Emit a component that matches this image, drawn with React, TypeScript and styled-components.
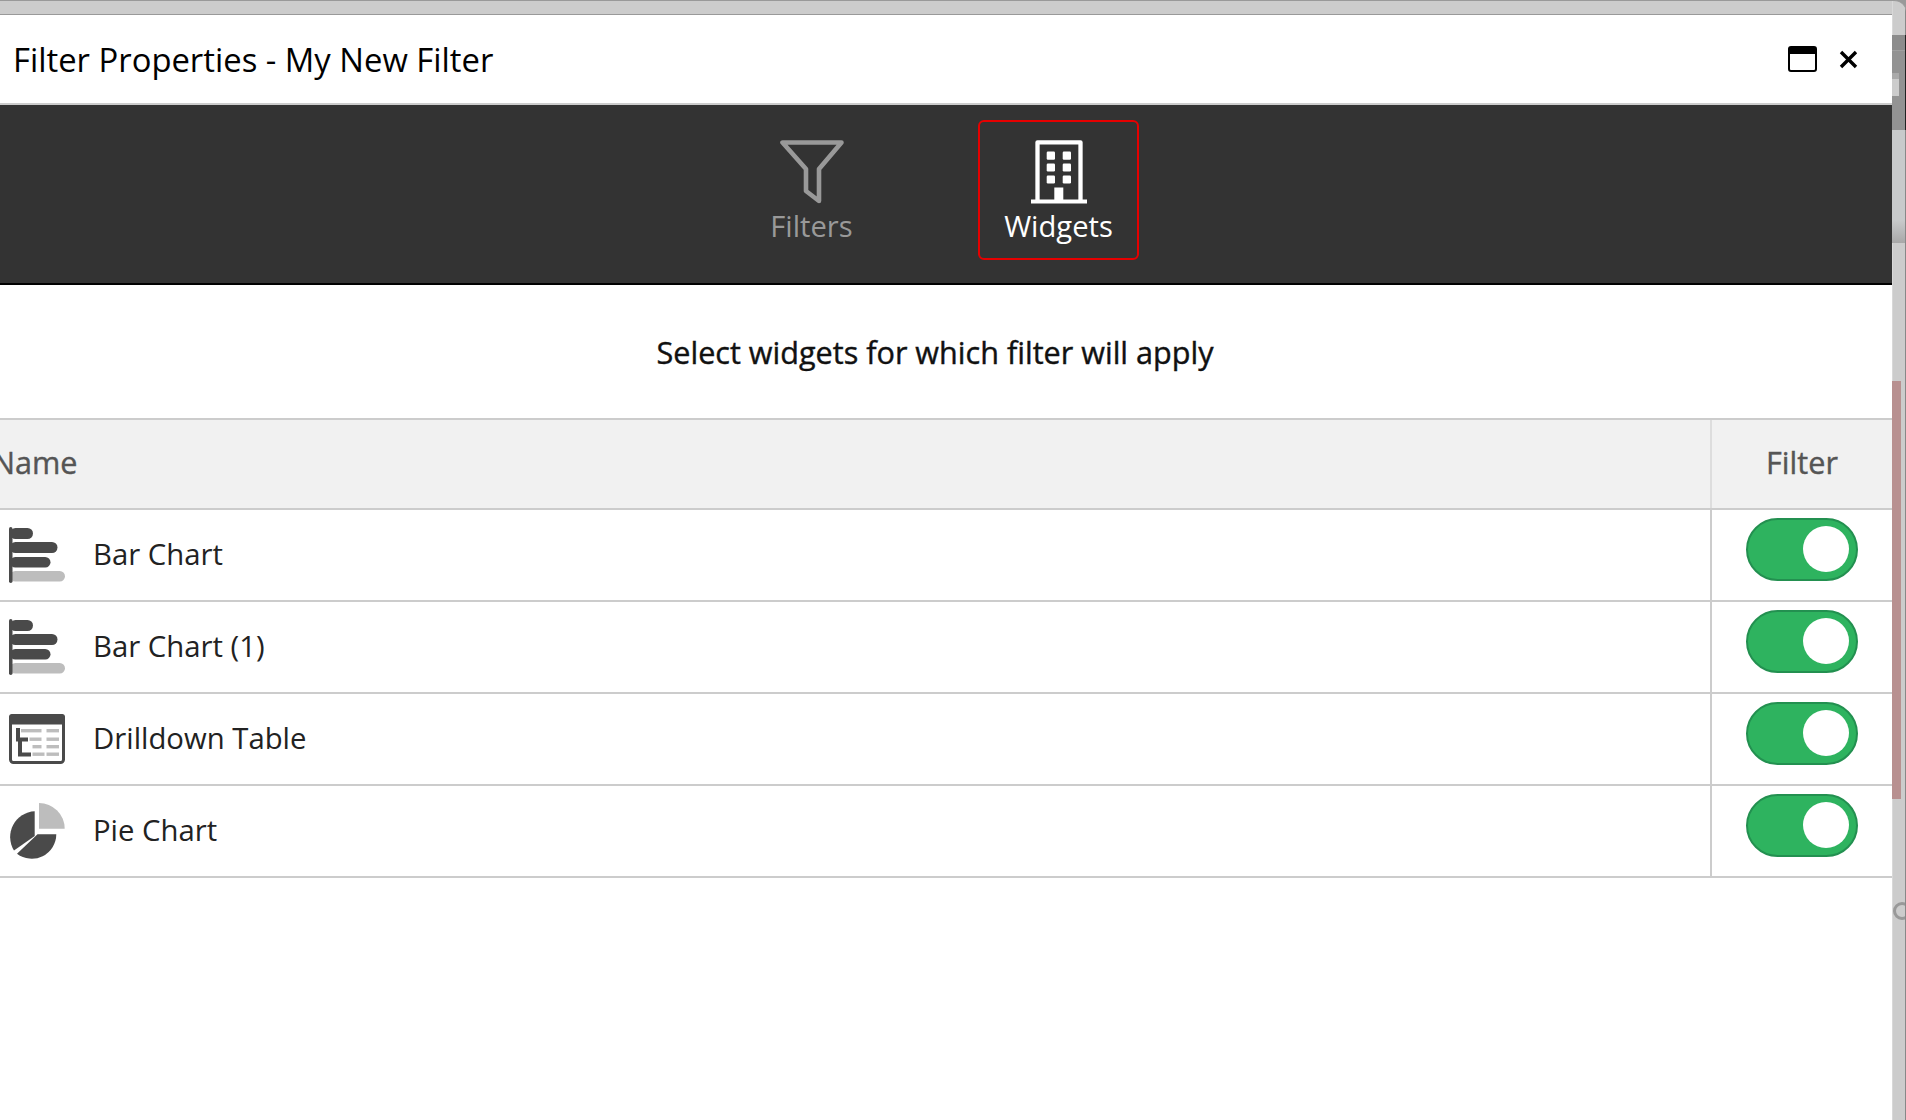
import React from "react";
import styled, { createGlobalStyle } from "styled-components";

const GlobalStyle = createGlobalStyle`
  * {
    box-sizing: border-box;
  }
  html, body {
    margin: 0;
    padding: 0;
    height: 100%;
    overflow: hidden;
    background: #999;
    font-family: "Open Sans", "Noto Sans", sans-serif;
  }
`;

const rows = [
  { name: "Bar Chart", kind: "bar" },
  { name: "Bar Chart (1)", kind: "bar" },
  { name: "Drilldown Table", kind: "table" },
  { name: "Pie Chart", kind: "pie" },
];

const BarIcon = () => (
  <svg width="56" height="56" viewBox="0 0 56 56">
    <rect x="1" y="1" width="23" height="11" rx="5.5" fill="#4a4a4a" />
    <rect x="1" y="15" width="47.5" height="11" rx="5.5" fill="#4a4a4a" />
    <rect x="1" y="30" width="40.5" height="10.5" rx="5.25" fill="#4a4a4a" />
    <rect x="1" y="44" width="55" height="10.5" rx="5.25" fill="#bdbdbd" />
    <rect x="0" y="0" width="3.5" height="56" rx="1.75" fill="#4a4a4a" />
  </svg>
);

const TableIcon = () => (
  <svg width="56" height="50" viewBox="0 0 56 50">
    <rect x="1.5" y="1.5" width="53" height="47" rx="3" fill="#fff" stroke="#4a4a4a" strokeWidth="3" />
    <rect x="0" y="0" width="56" height="10.5" rx="3" fill="#4a4a4a" />
    <path d="M9 14v11.5h10M11 25v15.5h11" stroke="#4a4a4a" strokeWidth="4" fill="none" />
    <g fill="#bdbdbd">
      <rect x="12" y="15" width="20.5" height="3.4" />
      <rect x="37.5" y="15" width="12.5" height="3.4" />
      <rect x="20.5" y="23.5" width="12" height="3.4" />
      <rect x="37.5" y="23.5" width="12.5" height="3.4" />
      <rect x="23.5" y="31" width="9" height="3.4" />
      <rect x="37.5" y="31" width="12.5" height="3.4" />
      <rect x="23.5" y="38.5" width="12" height="3.4" />
      <rect x="37.5" y="38.5" width="12.5" height="3.4" />
    </g>
  </svg>
);

const PieIcon = () => (
  <svg width="56" height="58" viewBox="0 -1 56 58">
    <path d="M30 0A25.7 25.7 0 0 1 55.7 25.7H30Z" fill="#bdbdbd" />
    <path d="M25.7 8.3V33L5 47.5A25.7 25.7 0 0 1 25.7 8.3Z" fill="#4a4a4a" />
    <path d="M8 50.7L28.5 31.3H47.3A24.5 24.5 0 0 1 8 50.7Z" fill="#4a4a4a" />
  </svg>
);

const FunnelIcon = () => (
  <svg width="64" height="64" viewBox="0 0 64 64" fill="none" stroke="#999" strokeWidth="4.6" strokeLinejoin="round">
    <path d="M2.5 2.5H61.5L39 29V61L26 51V29Z" />
  </svg>
);

const BuildingIcon = () => (
  <svg width="56" height="64" viewBox="0 0 56 64">
    <path d="M6.5 62V2.3H49.5V62" fill="none" stroke="#fff" strokeWidth="4.3" strokeLinejoin="round" />
    <rect x="0" y="59.5" width="56" height="4" fill="#fff" />
    <g fill="#fff">
      <rect x="15.7" y="11.5" width="8.3" height="8.3" rx="1.2" />
      <rect x="31.7" y="11.5" width="8.3" height="8.3" rx="1.2" />
      <rect x="15.7" y="23.5" width="8.3" height="8" rx="1.2" />
      <rect x="31.7" y="23.5" width="8.3" height="8" rx="1.2" />
      <rect x="15.7" y="35.5" width="8.3" height="8" rx="1.2" />
      <rect x="31.7" y="35.5" width="8.3" height="8" rx="1.2" />
      <rect x="23.3" y="47.5" width="9" height="13" />
    </g>
  </svg>
);

const rowIcon = (kind: string) => {
  if (kind === "bar") return <BarIcon />;
  if (kind === "table") return <TableIcon />;
  return <PieIcon />;
};

export default function App() {
  return (
    <>
      <GlobalStyle />
      <Page>
        <Dialog>
          <TitleBar>
            <Title>Filter Properties - My New Filter</Title>
            <TitleActions>
              <MaximizeIcon />
              <CloseIcon viewBox="0 0 19 19">
                <path d="M2 2l15 15M17 2L2 17" stroke="#000" strokeWidth="3.4" />
              </CloseIcon>
            </TitleActions>
          </TitleBar>
          <Tabs>
            <Tab>
              <FunnelIcon />
              <TabLabel>Filters</TabLabel>
            </Tab>
            <Tab $active>
              <BuildingIcon />
              <TabLabel $active>Widgets</TabLabel>
            </Tab>
          </Tabs>
          <Instruction>Select widgets for which filter will apply</Instruction>
          <TableHeader>
            <NameHead>Name</NameHead>
            <FilterHead>Filter</FilterHead>
          </TableHeader>
          {rows.map((row) => (
            <Row key={row.name}>
              <NameCell>
                <IconSlot>{rowIcon(row.kind)}</IconSlot>
                <RowName>{row.name}</RowName>
              </NameCell>
              <ToggleCell>
                <Toggle />
              </ToggleCell>
            </Row>
          ))}
        </Dialog>
        <Strip>
          <StripTop />
          <StripDark>
            <PageGlyph />
          </StripDark>
          <StripLight />
          <StripGray />
          <StripPink />
          <StripRest>
            <StripGlyph />
          </StripRest>
        </Strip>
      </Page>
    </>
  );
}

const Page = styled.div`
  display: flex;
  width: 1906px;
  height: 1120px;
  overflow: hidden;
  background: #ccc;
  border-top: 1px solid #999;
  border-top-right-radius: 12px;
`;

const Dialog = styled.div`
  width: 1892px;
  flex: none;
  margin-top: 13px;
  border-top: 1px solid #999;
  background: #fff;
  display: flex;
  flex-direction: column;
`;

const TitleBar = styled.div`
  height: 90px;
  flex: none;
  display: flex;
  align-items: center;
  justify-content: space-between;
  padding: 0 34px 0 13px;
  border-bottom: 2px solid #ccc;
`;

const Title = styled.div`
  font-size: 32.8px;
  color: #000;
`;

const TitleActions = styled.div`
  display: flex;
  align-items: center;
  gap: 22px;
`;

const MaximizeIcon = styled.div`
  width: 29px;
  height: 26px;
  border: 2.5px solid #000;
  border-top-width: 8px;
  border-radius: 3px;
`;

const CloseIcon = styled.svg`
  width: 19px;
  height: 19px;
`;

const Tabs = styled.div`
  height: 180px;
  flex: none;
  background: #333;
  border-bottom: 2px solid #000;
  display: flex;
  align-items: center;
  justify-content: center;
  gap: 86px;
  padding: 0 22px 8px 0;
`;

const Tab = styled.div<{ $active?: boolean }>`
  width: 161px;
  height: 140px;
  padding-top: 18px;
  border: 2px solid ${(p) => (p.$active ? "#e60000" : "transparent")};
  border-radius: 6px;
  display: flex;
  flex-direction: column;
  align-items: center;
`;

const TabLabel = styled.div<{ $active?: boolean }>`
  margin-top: 4px;
  font-size: 29.2px;
  line-height: 36px;
  color: ${(p) => (p.$active ? "#fff" : "#999")};
`;

const Instruction = styled.div`
  height: 133px;
  flex: none;
  display: flex;
  align-items: center;
  justify-content: center;
  padding-right: 22px;
  font-size: 30.6px;
  -webkit-text-stroke: 0.4px #111;
  color: #111;
`;

const TableHeader = styled.div`
  display: flex;
  flex: none;
  height: 92px;
  background: #f1f1f1;
  border-top: 2px solid #ccc;
  border-bottom: 2px solid #ccc;
`;

const NameHead = styled.div`
  flex: 1;
  display: flex;
  align-items: center;
  margin-left: -8px;
  padding-bottom: 4px;
  font-size: 30.6px;
  -webkit-text-stroke: 0.4px #555;
  color: #555;
`;

const FilterHead = styled.div`
  width: 182px;
  padding-bottom: 4px;
  border-left: 2px solid #ddd;
  display: flex;
  align-items: center;
  justify-content: center;
  font-size: 30.6px;
  -webkit-text-stroke: 0.4px #555;
  color: #555;
`;

const Row = styled.div`
  display: flex;
  flex: none;
  height: 92px;
  border-bottom: 2px solid #ccc;
`;

const NameCell = styled.div`
  flex: 1;
  display: flex;
  align-items: center;
  padding-left: 9px;
`;

const IconSlot = styled.div`
  width: 84px;
  display: flex;
  align-items: center;
`;

const RowName = styled.div`
  margin-top: -2px;
  font-size: 29.3px;
  color: #222;
`;

const ToggleCell = styled.div`
  width: 182px;
  border-left: 2px solid #ccc;
  display: flex;
  align-items: center;
  justify-content: center;
  padding-bottom: 12px;
`;

const Toggle = styled.div`
  position: relative;
  width: 112px;
  height: 63px;
  border-radius: 32px;
  background: #2eb35f;
  border: 2px solid #239050;
  &::after {
    content: "";
    position: absolute;
    top: 6.5px;
    right: 7px;
    width: 46px;
    height: 46px;
    border-radius: 50%;
    background: #fff;
  }
`;

const Strip = styled.div`
  flex: 1;
  display: flex;
  flex-direction: column;
  border-right: 1px solid #888;
  box-shadow: inset 1px 0 0 #d8d8d8;
`;

const StripTop = styled.div`
  height: 34px;
  flex: none;
`;

const StripDark = styled.div`
  position: relative;
  height: 95px;
  flex: none;
  margin-right: -1px;
  background: linear-gradient(#8c8c8c 0 15px, #a0a0a0 15px 16px, #939393 16px);
  border-right: 1px solid #222;
`;

const PageGlyph = styled.div`
  position: absolute;
  top: 38px;
  left: 0;
  width: 7px;
  height: 23px;
  background: linear-gradient(#aaa 0 6px, #ccc 6px);
`;

const StripLight = styled.div`
  height: 113px;
  flex: none;
  background: linear-gradient(#c8cacb 0 80%, #a8a8a8 100%);
`;

const StripGray = styled.div`
  height: 138px;
  flex: none;
`;

const StripPink = styled.div`
  height: 418px;
  flex: none;
  background: linear-gradient(90deg, #b89090 0 9px, transparent 9px);
`;

const StripRest = styled.div`
  flex: 1;
  position: relative;
  overflow: hidden;
`;

const StripGlyph = styled.div`
  position: absolute;
  top: 103px;
  left: 1px;
  width: 18px;
  height: 18px;
  border: 3px solid #999;
  border-radius: 50%;
`;
